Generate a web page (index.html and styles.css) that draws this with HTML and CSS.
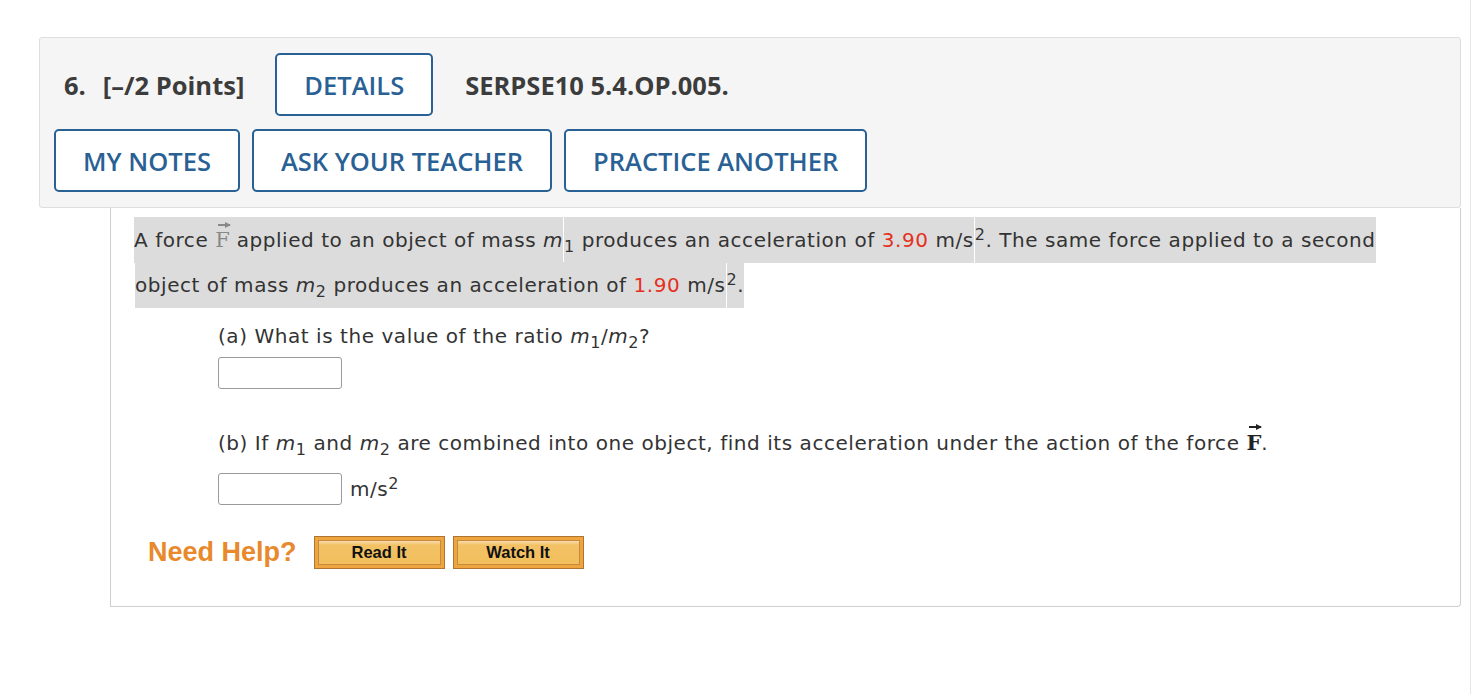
FILE: index.html
```html
<!DOCTYPE html>
<html lang="en">
<head>
<meta charset="utf-8">
<title>Question 6</title>
<link rel="stylesheet" href="styles.css">
</head>
<body>
<div class="page">
  <div class="main">
    <div class="qhead">
      <div class="qrow">
        <span class="qnum">6.</span>
        <span class="qpts">[&ndash;/2 Points]</span>
        <button class="btn">DETAILS</button>
        <span class="qid">SERPSE10 5.4.OP.005.</span>
      </div>
      <div class="qrow2">
        <button class="btn">MY NOTES</button>
        <button class="btn">ASK YOUR TEACHER</button>
        <button class="btn">PRACTICE ANOTHER</button>
      </div>
    </div>
    <div class="qbody">
      <p class="stem"><span class="hl">A force <span class="vec vec-grey">F</span> applied to an object of mass <i class="mv">m</i></span><span class="hl gap"><sub>1</sub> produces an acceleration of <span class="red">3.90</span> m/s</span><span class="hl gap"><sup>2</sup>. The same force applied to a second object of mass <i class="mv">m</i><sub>2</sub> produces an acceleration of <span class="red">1.90</span> m/s</span><span class="hl gap"><sup>2</sup>.</span></p>

      <div class="part part-a">
        <div class="plabel">(a) What is the value of the ratio <i class="mv">m</i><sub>1</sub>/<i class="mv">m</i><sub>2</sub>?</div>
        <div class="answer"><span class="inp"></span></div>
      </div>

      <div class="part part-b">
        <div class="plabel">(b) If <i class="mv">m</i><sub>1</sub> and <i class="mv">m</i><sub>2</sub> are combined into one object, find its acceleration under the action of the force <span class="vec vec-bold">F</span>.</div>
        <div class="answer"><span class="inp"></span><span class="unit">m/s<sup>2</sup></span></div>
      </div>

      <div class="help">
        <span class="need">Need Help?</span>
        <button class="hbtn"><span class="hin">Read It</span></button>
        <button class="hbtn"><span class="hin">Watch It</span></button>
      </div>
    </div>
  </div>
  <div class="rail"></div>
</div>
</body>
</html>
```
FILE: styles.css
```css
html, body {
  margin: 0;
  padding: 0;
  background: #ffffff;
}
.page {
  display: flex;
  min-height: 100vh;
  padding-left: 39px;
  box-sizing: border-box;
}
.main {
  flex: none;
  width: 1422px;
  margin-top: 37px;
}
.rail {
  flex: none;
  margin-left: 9px;
  border-left: 1px solid #e6e6e6;
}

/* header */
.qhead {
  background: #f5f5f5;
  border: 1px solid #dedede;
  border-radius: 3px;
  padding: 15px 0 15px 14px;
  font-family: "Open Sans", "Noto Sans", sans-serif;
}
.qrow {
  display: flex;
  align-items: center;
  height: 63px;
  color: #3c3c3c;
  font-weight: 700;
  font-size: 25.5px;
}
.qnum {
  margin-left: 10px;
  margin-right: 17px;
}
.qpts {
  margin-right: 31px;
}
.qrow .btn {
  margin-right: 32px;
}
.qrow2 {
  display: flex;
  gap: 12px;
  margin-top: 13px;
}
.btn {
  display: inline-flex;
  align-items: center;
  height: 63px;
  box-sizing: border-box;
  padding: 0 27px;
  border: 2px solid #2a6195;
  border-radius: 5px;
  background: #ffffff;
  color: #2a6195;
  font-family: "Open Sans", "Noto Sans", sans-serif;
  font-weight: 600;
  font-size: 25.5px;
}

/* body */
.qbody {
  margin-left: 71px;
  border: 1px solid #cfcfcf;
  border-top: 0;
  border-bottom-right-radius: 4px;
  padding: 10px 30px 37px 23px;
  font-family: "DejaVu Sans", sans-serif;
  font-size: 20px;
  letter-spacing: 0.55px;
  color: #333333;
}
.stem {
  margin: 0;
  line-height: 45px;
}
.hl {
  background: #dcdcdc;
  padding: 11px 0;
  -webkit-box-decoration-break: clone;
  box-decoration-break: clone;
}
.gap {
  margin-left: 1px;
}
.red {
  color: #e5301e;
}
.mv {
  font-style: italic;
}
sub, sup {
  font-size: 0.8em;
  line-height: 0;
  position: relative;
  vertical-align: baseline;
}
sub {
  top: 0.32em;
}
sup {
  top: -0.45em;
}
.vec {
  position: relative;
  display: inline-block;
  font-family: "DejaVu Serif", "Liberation Serif", serif;
  font-size: 21px;
  line-height: 1;
  letter-spacing: 0;
}
.vec::before {
  content: "";
  position: absolute;
  left: 3px;
  right: 0px;
  top: -6px;
  height: 1.5px;
  background: currentColor;
}
.vec::after {
  content: "";
  position: absolute;
  right: -1px;
  top: -8.5px;
  width: 0;
  height: 0;
  border-left: 6px solid currentColor;
  border-top: 3.25px solid transparent;
  border-bottom: 3.25px solid transparent;
}
.vec-grey {
  color: #888888;
}
.vec-bold {
  color: #222222;
  font-weight: 700;
}

.part {
  margin-left: 84px;
}
.plabel {
  line-height: 24px;
}
.part-a {
  margin-top: 16px;
}
.part-a .answer {
  margin-top: 9px;
}
.part-b {
  margin-top: 42px;
}
.part-b .answer {
  margin-top: 18px;
}
.answer {
  display: flex;
  align-items: center;
  height: 32px;
}
.inp {
  display: block;
  width: 124px;
  height: 32px;
  box-sizing: border-box;
  border: 1px solid #9a9a9a;
  border-radius: 3px;
  background: #ffffff;
}
.unit {
  margin-left: 8px;
}

/* help */
.help {
  display: flex;
  align-items: center;
  margin-top: 31px;
  margin-left: 14px;
  height: 33px;
  letter-spacing: 0;
}
.need {
  font-family: "Liberation Sans", Arial, sans-serif;
  font-weight: 700;
  font-size: 27px;
  color: #e8892c;
  margin-right: 17px;
}
.hbtn {
  display: inline-flex;
  width: 131px;
  height: 33px;
  box-sizing: border-box;
  padding: 3px;
  margin: 0 8px 0 0;
  border: 1px solid #ad7434;
  background: #eea53e;
}
.hin {
  flex: 1;
  display: flex;
  align-items: center;
  justify-content: center;
  border: 1px solid #c58a3f;
  background: linear-gradient(#f8dcae 0, #f3c265 4px, #f2bf5c 100%);
  font-family: "Liberation Sans", Arial, sans-serif;
  font-weight: 700;
  font-size: 16.5px;
  color: #111111;
}
```
